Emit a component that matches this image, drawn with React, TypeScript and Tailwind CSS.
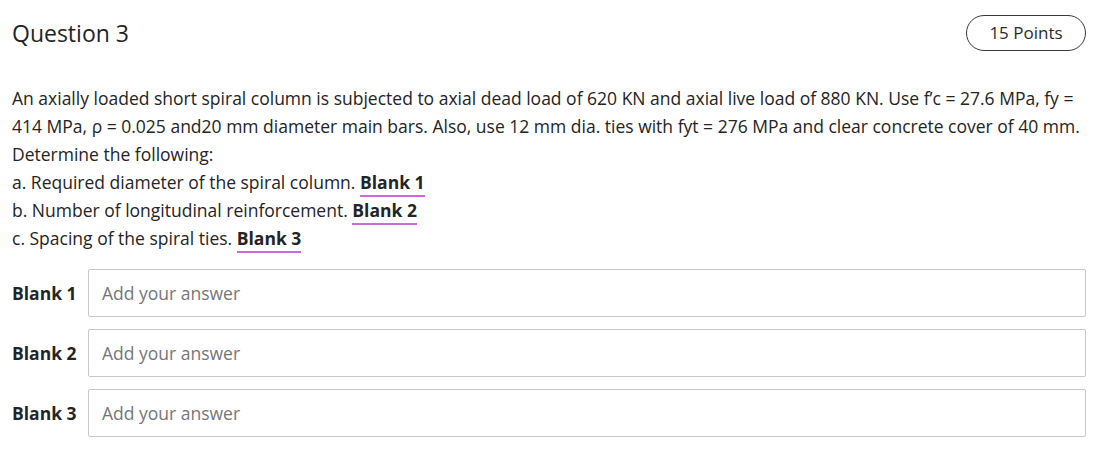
import React from "react";

const blanks = ["Blank 1", "Blank 2", "Blank 3"];

function BlankRef({ label }: { label: string }) {
  return (
    <span className="font-bold text-[#242424] border-b-2 border-[#c86dd7] pb-[1px]">
      {label}
    </span>
  );
}

export default function App() {
  return (
    <div
      className="w-[1096px] h-[466px] bg-white px-3 text-[#242424]"
      style={{ fontFamily: '"Open Sans", "Noto Sans", sans-serif' }}
    >
      {/* ===== header ===== */}
      <div className="flex items-center justify-between pt-[15px]">
        <h1 className="text-[23px] leading-[36px] font-normal">Question 3</h1>
        <div className="h-9 w-[120px] mr-[-2px] flex items-center justify-center rounded-full border border-[#3a3a3a] text-[17px] text-[#2b2b2b]">
          15 Points
        </div>
      </div>

      {/* ===== question ===== */}
      <div className="mt-[33px] text-[17.5px] leading-[28px] pr-1">
        <p>
          An axially loaded short spiral column is subjected to axial dead load of 620 KN and
          axial live load of 880 KN. Use f’c = 27.6 MPa, fy = 414 MPa, ρ = 0.025 and20 mm
          diameter main bars. Also, use 12 mm dia. ties with fyt = 276 MPa and clear concrete
          cover of 40 mm. Determine the following:
        </p>
        <p>
          a. Required diameter of the spiral column. <BlankRef label="Blank 1" />
        </p>
        <p>
          b. Number of longitudinal reinforcement. <BlankRef label="Blank 2" />
        </p>
        <p>
          c. Spacing of the spiral ties. <BlankRef label="Blank 3" />
        </p>
      </div>

      {/* ===== answers ===== */}
      <div className="mt-[17px] flex flex-col gap-3">
        {blanks.map((b) => (
          <div key={b} className="flex items-center">
            <span className="w-[76px] font-bold text-[17.5px]">{b}</span>
            <input
              placeholder="Add your answer"
              className="flex-1 h-12 px-[13px] border border-[#c8c8c8] rounded-[2px] text-[17.5px] text-[#242424] placeholder:text-[#767676] outline-none mr-[-2px]"
              style={{ fontFamily: '"Open Sans", "Noto Sans", sans-serif' }}
            />
          </div>
        ))}
      </div>
    </div>
  );
}
